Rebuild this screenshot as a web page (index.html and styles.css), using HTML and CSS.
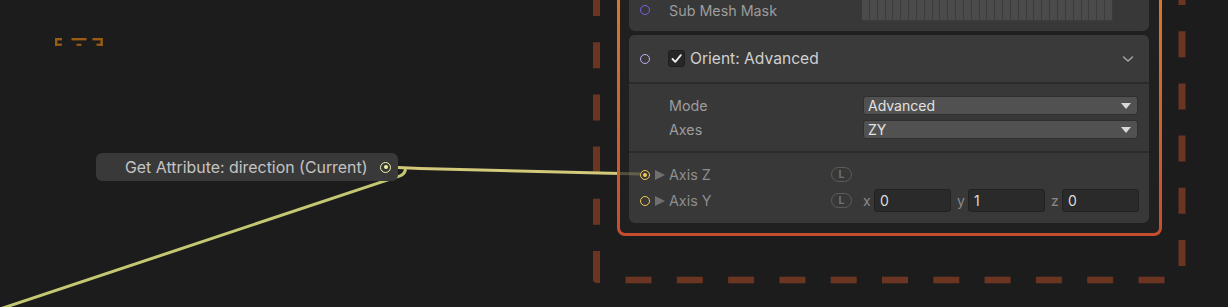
FILE: index.html
```html
<!DOCTYPE html>
<html>
<head>
<meta charset="utf-8">
<link rel="stylesheet" href="styles.css">
</head>
<body>
<div class="canvas">
  <svg class="layer back" width="1228" height="307" viewBox="0 0 1228 307">
    <g class="group-dash">
      <line x1="596.5" y1="-10" x2="596.5" y2="226" stroke-dasharray="26 26.2"/>
      <path class="corner" d="M593 251 H600 V283 H597 A4 4 0 0 1 593 279 Z"/>
      <line class="bottom" x1="625.5" y1="280" x2="1166" y2="280" stroke-dasharray="26 25.3"/>
      <line x1="1182" y1="-21" x2="1182" y2="268" stroke-dasharray="26 26.2"/>
    </g>
    <g class="mini-group">
      <rect x="55" y="38" width="2.4" height="8"/>
      <rect x="55" y="38" width="7" height="2.4"/>
      <rect x="55" y="43.6" width="7" height="2.2"/>
      <rect x="71.5" y="38" width="15" height="2.4"/>
      <rect x="76.5" y="43.8" width="5" height="2"/>
      <rect x="92.5" y="38" width="10" height="2.4"/>
      <rect x="100.4" y="38" width="2.4" height="8"/>
      <rect x="96.5" y="43.6" width="6" height="2.2"/>
    </g>
    <path class="wire wire-h" d="M398 167.5 L420 168.5 L620 173.5"/>
    <path class="wire wire-d" d="M0 309 L400 175.8 Q405 174 405.5 169"/>
  </svg>

  <div class="node attr-node">
    <span class="node-title">Get Attribute: direction (Current)</span>
    <span class="port port-out"></span>
  </div>

  <div class="context">
    <div class="block block-mask">
      <div class="row">
        <span class="port-cell"><span class="port port-mask"></span></span>
        <span class="label label-mask">Sub Mesh Mask</span>
        <span class="mask-field"></span>
      </div>
    </div>

    <div class="block block-orient">
      <div class="block-head">
        <span class="port-cell"><span class="port port-block"></span></span>
        <span class="checkbox">
          <svg width="13" height="13" viewBox="0 0 13 13"><path d="M2.5 7 L5.3 9.8 L10.8 3.2" fill="none" stroke="#f0f0f0" stroke-width="1.8" stroke-linecap="round" stroke-linejoin="round"/></svg>
        </span>
        <span class="block-title">Orient: Advanced</span>
        <svg class="chevron" width="12" height="8" viewBox="0 0 12 8"><path d="M1.5 2 L6 6 L10.5 2" fill="none" stroke="#a8a8a8" stroke-width="1.5" stroke-linecap="round" stroke-linejoin="round"/></svg>
      </div>

      <div class="settings">
        <div class="setting">
          <span class="label">Mode</span>
          <div class="dropdown"><span>Advanced</span><span class="tri"></span></div>
        </div>
        <div class="setting">
          <span class="label">Axes</span>
          <div class="dropdown"><span>ZY</span><span class="tri"></span></div>
        </div>
      </div>

      <div class="ports">
        <div class="port-row">
          <span class="port-cell port-cell-exp"><span class="port port-axis connected"></span><span class="expander"></span></span>
          <span class="label label-dim">Axis Z</span>
          <span class="lbadge">L</span>
        </div>
        <div class="port-row">
          <span class="port-cell port-cell-exp"><span class="port port-axis"></span><span class="expander"></span></span>
          <span class="label label-dim">Axis Y</span>
          <span class="lbadge">L</span>
          <div class="vec">
            <span class="axis">x</span><span class="field">0</span>
            <span class="axis">y</span><span class="field">1</span>
            <span class="axis">z</span><span class="field">0</span>
          </div>
        </div>
      </div>
    </div>
  </div>

  <svg class="layer front" width="1228" height="307" viewBox="0 0 1228 307">
    <path class="wire-faded" d="M620 173.5 L640 174"/>
  </svg>
</div>
</body>
</html>
```

FILE: styles.css
```css
* { box-sizing: border-box; }
html, body {
  margin: 0;
  padding: 0;
  background: #1c1c1c;
  overflow: hidden;
}
body {
  font-family: Inter, "Noto Sans", "Liberation Sans", sans-serif;
  color: #c8c8c8;
}
.canvas {
  position: relative;
  width: 1228px;
  height: 307px;
  overflow: hidden;
  background: #1c1c1c;
}
.layer {
  position: absolute;
  left: 0;
  top: 0;
  pointer-events: none;
}
.layer.back { z-index: 0; }
.layer.front { z-index: 5; }

.group-dash line {
  stroke: #6b3522;
  stroke-width: 7;
}
.group-dash line.bottom { stroke-width: 6.5; }
.group-dash .corner { fill: #6b3522; }
.mini-group rect { fill: #9a5c12; }

.wire { fill: none; stroke-width: 3; stroke-linejoin: round; }
.wire-h { stroke: #d3c97a; }
.wire-d { stroke: #c3c872; }
.wire-faded { fill: none; stroke: rgba(211, 201, 122, 0.28); stroke-width: 3; }

/* Get Attribute node */
.node {
  position: absolute;
  z-index: 2;
}
.attr-node {
  left: 96px;
  top: 153px;
  width: 302px;
  height: 28px;
  background: #393939;
  border-radius: 6px;
  display: flex;
  align-items: center;
  padding-left: 29px;
  padding-right: 7px;
}
.node-title {
  flex: 1;
  font-size: 15.9px;
  color: #c4c4c4;
  white-space: nowrap;
}
.port {
  display: inline-block;
  width: 10px;
  height: 10px;
  border-radius: 50%;
  border: 1.7px solid #f0c850;
  position: relative;
  flex: none;
}
.port-out {
  width: 11px;
  height: 11px;
  border-color: #f2f2a6;
}
.port-out::after,
.port.connected::after {
  content: "";
  position: absolute;
  left: 50%;
  top: 50%;
  width: 4px;
  height: 4px;
  margin: -2px 0 0 -2px;
  border-radius: 50%;
  background: #f2f2a6;
}
.port.connected::after { background: #f0c850; }

/* Context */
.context {
  position: absolute;
  z-index: 3;
  left: 617px;
  top: -50px;
  width: 545px;
  height: 286px;
  border: 3px solid transparent;
  border-radius: 8px;
  background:
    linear-gradient(#202020, #202020) padding-box,
    linear-gradient(180deg, #d9822a 0%, #d06a2c 45%, #c54d2f 100%) border-box;
  padding: 0 10px 10px 9px;
  display: flex;
  flex-direction: column;
  gap: 4px;
}
.block {
  background: #383838;
  border-radius: 6px;
}
.block-mask {
  padding: 45px 0 9px 0;
}
.row {
  display: flex;
  align-items: center;
  height: 24px;
}
.port-cell {
  width: 40px;
  flex: none;
  display: flex;
  align-items: center;
  padding-left: 11px;
}
.port-cell-exp { gap: 5px; }
.port-mask { border-color: #7263e6; }
.port-block { border-color: #c4aef2; }
.label {
  font-size: 14.3px;
  color: #9c9c9c;
  white-space: nowrap;
}
.label-mask { width: 193px; flex: none; }
.mask-field {
  width: 251px;
  height: 24px;
  border-radius: 2px;
  background: repeating-linear-gradient(90deg, #4b4b4b 0 6.84px, #3b3b3b 6.84px 7.84px);
  border-bottom: 2px solid #3b3b3b;
}

.block-orient {
  display: flex;
  flex-direction: column;
}
.block-head {
  height: 49px;
  display: flex;
  align-items: center;
  border-bottom: 2px solid #2b2b2b;
  background: #3a3a3a;
  border-radius: 6px 6px 0 0;
}
.checkbox {
  width: 17px;
  height: 17px;
  margin-left: -1px;
  border-radius: 3px;
  background: #272727;
  border: 1px solid #1e1e1e;
  display: flex;
  align-items: center;
  justify-content: center;
  flex: none;
}
.block-title {
  margin-left: 5px;
  font-size: 15.6px;
  color: #d0d0d0;
  flex: 1;
}
.chevron { margin-right: 15px; }

.settings {
  padding: 12px 11px 12px 40px;
  display: flex;
  flex-direction: column;
  gap: 5px;
  border-bottom: 2px solid #2b2b2b;
}
.setting {
  display: flex;
  align-items: center;
  height: 19px;
}
.setting .label { width: 194px; flex: none; }
.dropdown {
  flex: 1;
  height: 19px;
  background: #515151;
  border: 1px solid #2f2f2f;
  border-radius: 3px;
  display: flex;
  align-items: center;
  justify-content: space-between;
  padding: 0 6px 0 4px;
  font-size: 14px;
  color: #e2e2e2;
}
.tri {
  width: 0;
  height: 0;
  border-left: 5.5px solid transparent;
  border-right: 5.5px solid transparent;
  border-top: 6px solid #d8d8d8;
}

.ports {
  padding: 10px 11px 11px 0;
  display: flex;
  flex-direction: column;
  gap: 3px;
}
.port-row {
  display: flex;
  align-items: center;
  height: 23px;
}
.expander {
  width: 0;
  height: 0;
  border-top: 5.5px solid transparent;
  border-bottom: 5.5px solid transparent;
  border-left: 10px solid #707070;
  flex: none;
}
.label-dim { color: #8e8e8e; width: 148px; flex: none; }
.lbadge {
  width: 21px;
  height: 15px;
  border: 1.5px solid #5c5c5c;
  border-radius: 8px;
  color: #707070;
  font-size: 10.5px;
  font-weight: 700;
  display: flex;
  align-items: center;
  justify-content: center;
  flex: none;
  margin-left: 14px;
}
.vec {
  display: flex;
  align-items: center;
  margin-left: 11px;
  flex: 1;
}
.axis {
  font-size: 14px;
  color: #8a8a8a;
  width: 11px;
  flex: none;
}
.field {
  width: 77px;
  height: 23px;
  background: #2a2a2a;
  border: 1px solid #222;
  border-radius: 3px;
  font-size: 14px;
  color: #dcdcdc;
  display: flex;
  align-items: center;
  padding-left: 5px;
  margin-right: 6px;
}
.field:last-child { margin-right: 0; }
```
